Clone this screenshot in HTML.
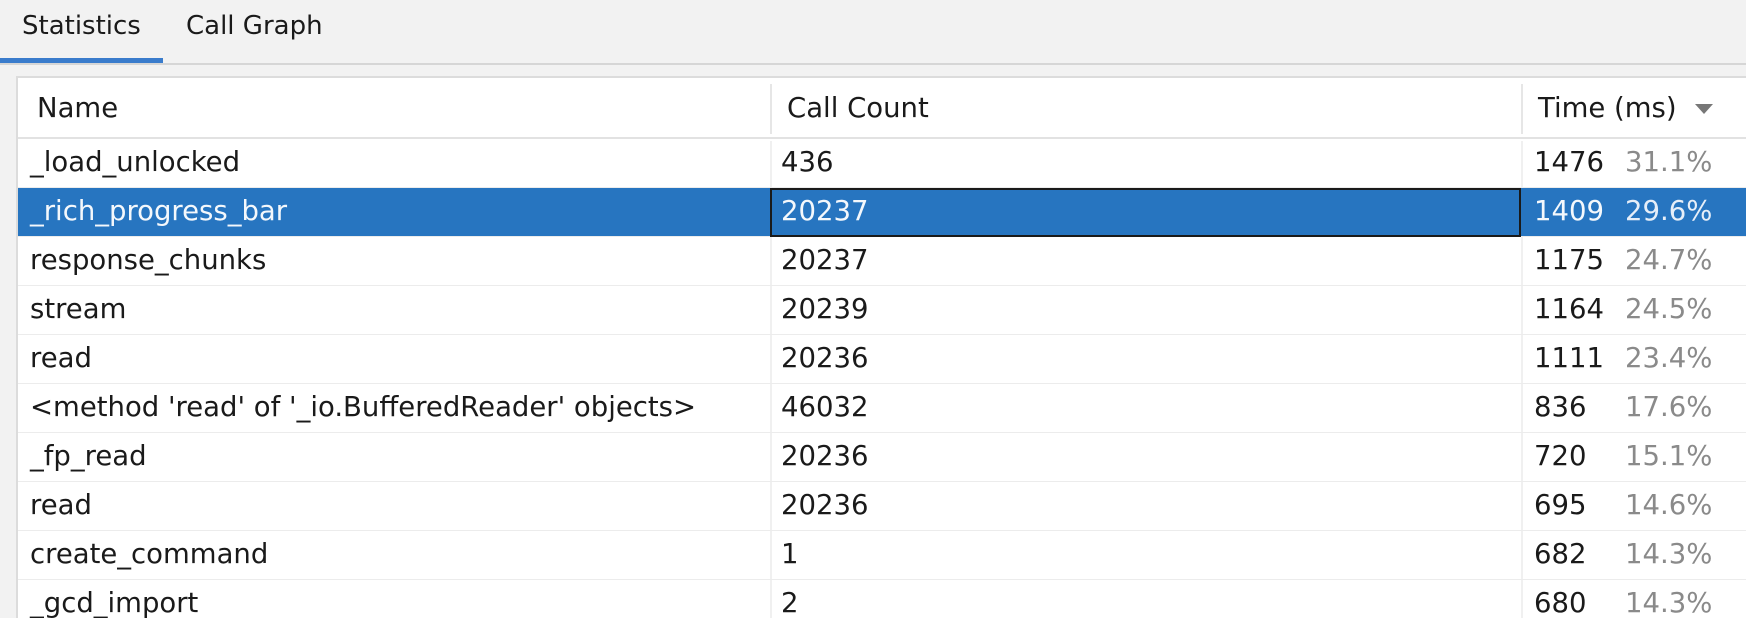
<!DOCTYPE html>
<html style="overflow:hidden;height:618px"><head><style>
*{margin:0;padding:0;box-sizing:border-box}
body{width:1746px;height:618px;overflow:hidden;background:#f2f2f2;font-family:"DejaVu Sans","Liberation Sans",sans-serif;color:#1a1a1a;position:relative}
.tab{position:absolute;top:11px;font-size:26px}
.ul{position:absolute;left:0;top:58px;width:163px;height:6px;background:#3a7ccc}
.gl{position:absolute;left:0;top:63px;width:1746px;height:2px;background:#d6d6d6}
.tbl{position:absolute;left:16px;top:76px;width:1730px;height:542px;overflow:hidden;background:#fff;border:2px solid #dcdcdc;border-right:none;border-bottom:none}
.hdr{position:absolute;left:0;top:0;width:100%;height:61px;border-bottom:2px solid #e2e2e2}
.h{position:absolute;top:14px;font-size:27.5px}
.vd{position:absolute;top:6px;width:2px;height:50px;background:#e6e6e6}
.row{position:absolute;left:0;width:100%;height:49px;border-bottom:1px solid #ececec;font-size:27.5px}
.row span{position:absolute;top:7px}
.c1{left:12px}.c2{left:763px}.c3{left:1516px}.c4{left:1607px;color:#8a8a8a}
.sel{background:#2775c0;color:#f4f8fc}
.sel .c4{color:#e6eef8}
.focus{position:absolute;left:752px;top:0;width:751px;height:49px;border:2px solid #1a1a1a}
.bd{position:absolute;top:63px;width:2px;height:520px;background:#f0f0f0}
</style></head><body>
<div class="tab" style="left:22px">Statistics</div>
<div class="tab" style="left:186px">Call Graph</div>
<div class="ul"></div><div class="gl"></div>
<div class="tbl">
<div class="hdr">
<div class="h" style="left:19px">Name</div>
<div class="vd" style="left:752px"></div>
<div class="h" style="left:769px">Call Count</div>
<div class="vd" style="left:1503px"></div>
<div class="h" style="left:1520px">Time (ms)</div>
<svg style="position:absolute;left:1677px;top:26px" width="18" height="11"><path d="M0 0H18L9 10Z" fill="#777"/></svg>
</div>
<div class="bd" style="left:752px"></div><div class="bd" style="left:1503px"></div>
<div class="row" style="top:61px"><span class="c1">_load_unlocked</span><span class="c2">436</span><span class="c3">1476</span><span class="c4">31.1%</span></div>
<div class="row sel" style="top:110px"><span class="c1">_rich_progress_bar</span><div class="focus"></div><span class="c2">20237</span><span class="c3">1409</span><span class="c4">29.6%</span></div>
<div class="row" style="top:159px"><span class="c1">response_chunks</span><span class="c2">20237</span><span class="c3">1175</span><span class="c4">24.7%</span></div>
<div class="row" style="top:208px"><span class="c1">stream</span><span class="c2">20239</span><span class="c3">1164</span><span class="c4">24.5%</span></div>
<div class="row" style="top:257px"><span class="c1">read</span><span class="c2">20236</span><span class="c3">1111</span><span class="c4">23.4%</span></div>
<div class="row" style="top:306px"><span class="c1">&lt;method 'read' of '_io.BufferedReader' objects&gt;</span><span class="c2">46032</span><span class="c3">836</span><span class="c4">17.6%</span></div>
<div class="row" style="top:355px"><span class="c1">_fp_read</span><span class="c2">20236</span><span class="c3">720</span><span class="c4">15.1%</span></div>
<div class="row" style="top:404px"><span class="c1">read</span><span class="c2">20236</span><span class="c3">695</span><span class="c4">14.6%</span></div>
<div class="row" style="top:453px"><span class="c1">create_command</span><span class="c2">1</span><span class="c3">682</span><span class="c4">14.3%</span></div>
<div class="row" style="top:502px"><span class="c1">_gcd_import</span><span class="c2">2</span><span class="c3">680</span><span class="c4">14.3%</span></div>
</div>
</body></html>
